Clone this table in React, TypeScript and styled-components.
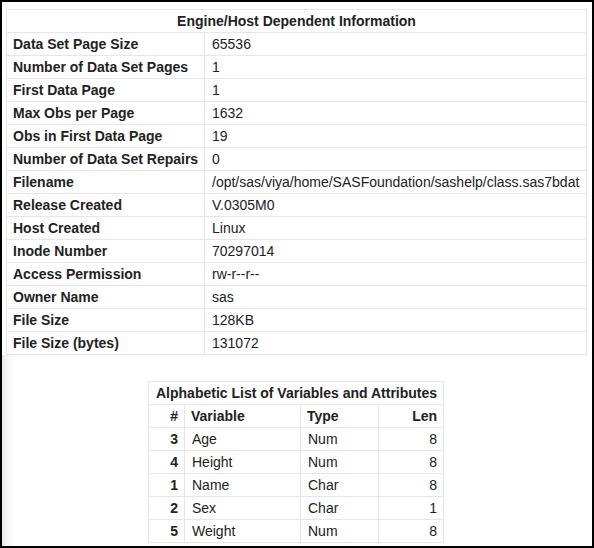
import React from "react";
import styled, { createGlobalStyle } from "styled-components";

const Global = createGlobalStyle`
  html, body { margin: 0; padding: 0; background: #fff; }
  body { font-family: "Liberation Sans", Arial, sans-serif; color: #222; }
`;

const Frame = styled.div`
  box-sizing: border-box;
  width: 594px;
  height: 548px;
  border: 2px solid #000;
  padding-top: 7px;
  background: #fff;
  overflow: hidden;
  display: flex;
  flex-direction: column;
`;

const Lower = styled.div`
  flex: 1;
  padding-top: 26px;
  background: linear-gradient(to right, #e9e9e9 0, #f6f6f6 6px, #fff 14px);
`;

const Table = styled.table<{ $w: number; $ml?: number }>`
  border-collapse: collapse;
  table-layout: fixed;
  width: ${(p) => p.$w}px;
  margin: 0 auto 0 ${(p) => (p.$ml !== undefined ? `${p.$ml}px` : "auto")};
  background: #fff;
  font-size: 14px;
  line-height: 16px;
`;

const Col = styled.col<{ $w: number }>`
  width: ${(p) => p.$w}px;
`;

const Title = styled.th`
  border: 1px solid #e6e6e6;
  padding: 3px 7px;
  font-weight: bold;
  text-align: center;
  white-space: nowrap;
`;

const Head = styled.th<{ $align?: "left" | "right" }>`
  border: 1px solid #e6e6e6;
  padding: 3px 6px 3px 6px;
  font-weight: bold;
  text-align: ${(p) => p.$align ?? "left"};
  white-space: nowrap;
`;

const Cell = styled.td<{ $align?: "left" | "right" }>`
  border: 1px solid #e6e6e6;
  padding: 3px 6px 3px 7px;
  font-weight: normal;
  text-align: ${(p) => p.$align ?? "left"};
  white-space: nowrap;
`;

const engine: [string, string][] = [
  ["Data Set Page Size", "65536"],
  ["Number of Data Set Pages", "1"],
  ["First Data Page", "1"],
  ["Max Obs per Page", "1632"],
  ["Obs in First Data Page", "19"],
  ["Number of Data Set Repairs", "0"],
  ["Filename", "/opt/sas/viya/home/SASFoundation/sashelp/class.sas7bdat"],
  ["Release Created", "V.0305M0"],
  ["Host Created", "Linux"],
  ["Inode Number", "70297014"],
  ["Access Permission", "rw-r--r--"],
  ["Owner Name", "sas"],
  ["File Size", "128KB"],
  ["File Size (bytes)", "131072"],
];

const vars: [string, string, string, string][] = [
  ["3", "Age", "Num", "8"],
  ["4", "Height", "Num", "8"],
  ["1", "Name", "Char", "8"],
  ["2", "Sex", "Char", "1"],
  ["5", "Weight", "Num", "8"],
];

export default function App() {
  return (
    <>
      <Global />
      <Frame>
        <Table $w={580} $ml={4}>
          <colgroup>
            <Col $w={198} />
            <Col $w={382} />
          </colgroup>
          <thead>
            <tr>
              <Title colSpan={2}>Engine/Host Dependent Information</Title>
            </tr>
          </thead>
          <tbody>
            {engine.map(([k, v]) => (
              <tr key={k}>
                <Head>{k}</Head>
                <Cell>{v}</Cell>
              </tr>
            ))}
          </tbody>
        </Table>
        <Lower>
          <Table $w={295} $ml={146}>
            <colgroup>
              <Col $w={36} />
              <Col $w={116} />
              <Col $w={78} />
              <Col $w={65} />
            </colgroup>
            <thead>
              <tr>
                <Title colSpan={4}>Alphabetic List of Variables and Attributes</Title>
              </tr>
              <tr>
                <Head $align="right">#</Head>
                <Head>Variable</Head>
                <Head>Type</Head>
                <Head $align="right">Len</Head>
              </tr>
            </thead>
            <tbody>
              {vars.map(([n, name, type, len]) => (
                <tr key={name}>
                  <Head $align="right">{n}</Head>
                  <Cell>{name}</Cell>
                  <Cell>{type}</Cell>
                  <Cell $align="right">{len}</Cell>
                </tr>
              ))}
            </tbody>
          </Table>
        </Lower>
      </Frame>
    </>
  );
}
